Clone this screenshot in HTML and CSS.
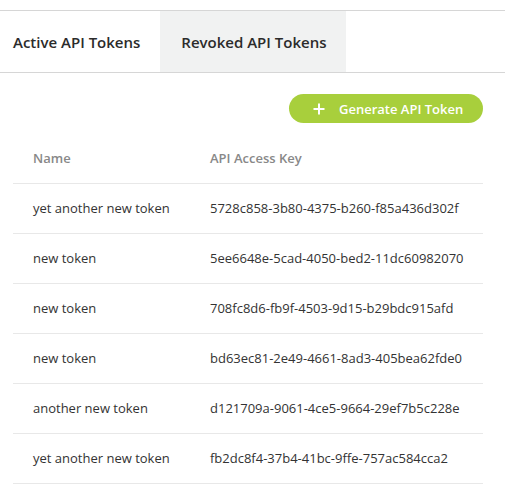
FILE: index.html
```html
<!DOCTYPE html>
<html>
<head>
<meta charset="utf-8">
<link rel="stylesheet" href="styles.css">
</head>
<body>
<div class="page">
  <div class="tabs">
    <div class="tab tab-first">Active API Tokens</div>
    <div class="tab tab-selected">Revoked API Tokens</div>
  </div>
  <div class="content">
    <div class="actions">
      <button class="btn">
        <svg class="plus" width="12" height="12" viewBox="0 0 12 12"><path d="M6 0.5v11M0.5 6h11" stroke="#fff" stroke-width="2" fill="none"/></svg>
        <span>Generate API Token</span>
      </button>
    </div>
    <table class="tokens">
      <thead>
        <tr><th class="c-name">Name</th><th>API Access Key</th></tr>
      </thead>
      <tbody>
        <tr><td class="c-name">yet another new token</td><td>5728c858-3b80-4375-b260-f85a436d302f</td></tr>
        <tr><td class="c-name">new token</td><td>5ee6648e-5cad-4050-bed2-11dc60982070</td></tr>
        <tr><td class="c-name">new token</td><td>708fc8d6-fb9f-4503-9d15-b29bdc915afd</td></tr>
        <tr><td class="c-name">new token</td><td>bd63ec81-2e49-4661-8ad3-405bea62fde0</td></tr>
        <tr><td class="c-name">another new token</td><td>d121709a-9061-4ce5-9664-29ef7b5c228e</td></tr>
        <tr><td class="c-name">yet another new token</td><td>fb2dc8f4-37b4-41bc-9ffe-757ac584cca2</td></tr>
      </tbody>
    </table>
  </div>
</div>
</body>
</html>
```
FILE: styles.css
```css
* { box-sizing: border-box; }
html, body { margin: 0; padding: 0; background: #fff; }
body {
  font-family: "Open Sans", "Liberation Sans", sans-serif;
  color: #333;
  font-size: 13px;
}
.page { padding-top: 10px; }
.tabs {
  display: flex;
  border-top: 1px solid #d6d6d6;
  border-bottom: 1px solid #d6d6d6;
  height: 63px;
}
.tab {
  display: flex;
  align-items: center;
  font-size: 15px;
  font-weight: 600;
  color: #2b2b2b;
  padding: 0 19px 0 21px;
}
.tab-first { padding-left: 13px; padding-right: 20px; }
.tab-selected { background: #f1f2f2; }
.content { padding: 0 22px 0 13px; }
.actions {
  display: flex;
  justify-content: flex-end;
  padding-top: 21px;
}
.btn {
  display: flex;
  align-items: center;
  gap: 14px;
  height: 29px;
  width: 194px;
  padding: 0 0 0 24px;
  border: none;
  border-radius: 15px;
  background: #a8cf3c;
  color: #fff;
  font-family: inherit;
  font-size: 13px;
  font-weight: 600;
}
.plus { display: block; }
.tokens {
  width: 100%;
  border-collapse: collapse;
  margin-top: 10px;
}
.tokens th {
  text-align: left;
  font-weight: 600;
  color: #888;
  height: 50px;
  padding: 0;
  vertical-align: middle;
}
.tokens td {
  height: 50px;
  padding: 0;
  border-top: 1px solid #e8e8e8;
  vertical-align: middle;
}
.tokens tbody tr:last-child td { border-bottom: 1px solid #e8e8e8; }
.c-name { width: 197px; padding-left: 20px !important; }
```
